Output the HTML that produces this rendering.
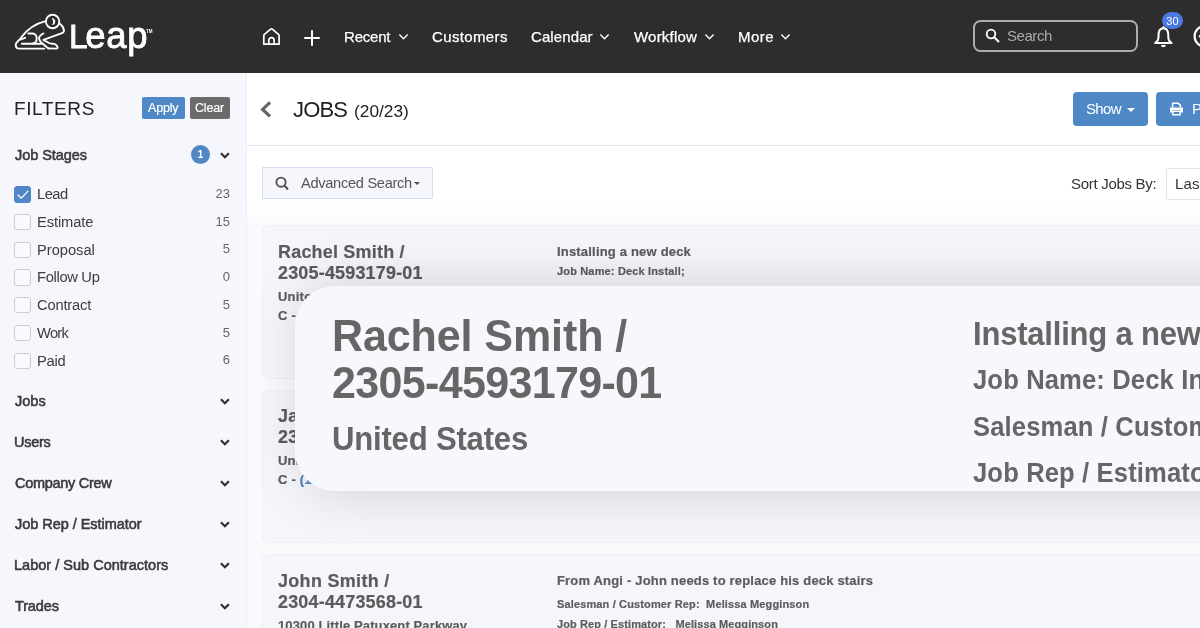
<!DOCTYPE html>
<html lang="en">
<head>
<meta charset="utf-8">
<title>Leap - Jobs</title>
<style>
*{box-sizing:border-box;margin:0;padding:0}
html,body{width:1200px;height:628px;overflow:hidden;background:#fff}
body{position:relative;font-family:"Liberation Sans",Arial,sans-serif;color:#333}
.t{position:absolute;white-space:nowrap;line-height:1;will-change:transform}
.abs{position:absolute}
#hdr{position:absolute;left:0;top:0;width:1200px;height:72.5px;background:#2d2d2d}
#side{position:absolute;left:0;top:72px;width:246px;height:556px;background:#f6f7fd}
.cb{position:absolute;left:14.3px;width:16.4px;height:16.4px;border:1px solid #cbcbd1;border-radius:3px;background:#f9fafe}
.cb.on{background:#4f86c6;border-color:#4f86c6}
.chev{position:absolute;left:218.5px;width:12px;height:9px}
#main{position:absolute;left:246px;top:72px;width:954px;height:556px;background:#fff}
.card{position:absolute;left:262px;width:960px;height:153.6px;background:#f5f6fc;border:1px solid #eef0f7;border-radius:7px}
</style>
</head>
<body>

<!-- ===== MAIN ===== -->
<div id="main"></div>
<div class="abs" style="left:247px;top:144.5px;width:953px;height:1px;background:#e8e8eb"></div>
<div class="abs" style="left:247px;top:200px;width:953px;height:428px;background:linear-gradient(#fff 0,#fafafc 26px,#fafafc 100%)"></div>

<!-- title bar -->
<svg class="abs" style="left:258px;top:99px" width="16" height="21" viewBox="0 0 16 21"><path d="M12 3.4 L4.6 10.4 L12 17.4" fill="none" stroke="#666" stroke-width="3.2"/></svg>
<div class="t" style="font-size:22px;top:99px;left:293.00px;letter-spacing:-0.833px;transform:translateY(0.20px);color:#222;">JOBS</div>
<div class="t" style="font-size:17.3px;top:103px;left:353.70px;letter-spacing:0.017px;transform:translateY(0.20px);color:#222;">(20/23)</div>

<div class="abs" style="left:1073px;top:91.5px;width:74.8px;height:34.7px;background:#4f88c6;border-radius:4px"></div>
<div class="t" style="font-size:15px;top:101px;left:1085.70px;letter-spacing:-0.667px;transform:translateY(0.40px);color:#fff;">Show</div>
<div class="abs" style="left:1126.8px;top:108px;width:0;height:0;border-left:4.2px solid transparent;border-right:4.2px solid transparent;border-top:4.2px solid #fff"></div>
<div class="abs" style="left:1156px;top:91.5px;width:80px;height:34.7px;background:#4f88c6;border-radius:4px"></div>
<svg class="abs" style="left:1169px;top:102px" width="15" height="14" viewBox="0 0 15 14"><path d="M3.6 5.2V1.2h5.6l2.2 2.2v1.8" fill="none" stroke="#fff" stroke-width="1.5"/><path d="M1 5.4h13v5h-2.4v-2.2h-8.2v2.2h-2.4z" fill="#fff"/><path d="M3.9 9.4h7.2v3.4h-7.2z" fill="none" stroke="#fff" stroke-width="1.4"/></svg>
<div class="t" style="font-size:15px;top:101px;left:1191.60px;letter-spacing:0.200px;transform:translateY(0.40px);color:#fff;">Print</div>

<!-- advanced search -->
<div class="abs" style="left:262px;top:167px;width:170.7px;height:32px;background:#f5f7fd;border:1px solid #d3dff0;border-radius:1px"></div>
<svg class="abs" style="left:274px;top:175px" width="16" height="16" viewBox="0 0 16 16"><circle cx="7" cy="7.2" r="4.6" fill="none" stroke="#505050" stroke-width="1.9"/><path d="M10.3 10.6 L14 14.4" stroke="#505050" stroke-width="2.1"/></svg>
<div class="t" style="font-size:14.6px;top:175px;left:300.80px;letter-spacing:-0.286px;transform:translateY(0.90px);color:#555;">Advanced Search</div>
<div class="abs" style="left:414px;top:182px;width:0;height:0;border-left:3.7px solid transparent;border-right:3.7px solid transparent;border-top:3.7px solid #505050"></div>

<div class="t" style="font-size:15px;top:175px;left:1070.90px;letter-spacing:-0.292px;transform:translateY(0.90px);color:#333;">Sort Jobs By:</div>
<div class="abs" style="left:1166.3px;top:168.3px;width:80px;height:31.5px;background:#fff;border:1px solid #e4e4e8;border-radius:3px"></div>
<div class="t" style="font-size:15px;top:175px;left:1175.30px;letter-spacing:0.200px;transform:translateY(0.90px);color:#333;">Last Modified</div>

<!-- cards -->
<div class="card" style="top:225px"></div>
<div class="t" style="font-size:18px;top:243px;left:277.70px;letter-spacing:0.192px;transform:translateY(0.00px) scaleY(1.046);transform-origin:0 15px;font-weight:700;color:#5c5c5c;-webkit-text-stroke:0.2px #5c5c5c;left:277.7px;">Rachel Smith /</div>
<div class="t" style="font-size:18px;top:263px;left:276.90px;letter-spacing:0.171px;transform:translateY(0.60px) scaleY(1.046);transform-origin:0 15px;font-weight:700;color:#5c5c5c;-webkit-text-stroke:0.2px #5c5c5c;left:277.7px;">2305-4593179-01</div>
<div class="t" style="font-size:13px;top:289px;left:276.90px;letter-spacing:0.220px;transform:translateY(0.80px) scaleY(1.046);transform-origin:0 11px;font-weight:700;color:#5c5c5c;-webkit-text-stroke:0.2px #5c5c5c;left:277.7px;">United States</div>
<div class="t" style="font-size:13px;top:308px;left:277.90px;letter-spacing:0.220px;transform:translateY(0.70px) scaleY(1.046);transform-origin:0 11px;font-weight:700;color:#5c5c5c;-webkit-text-stroke:0.2px #5c5c5c;left:277.7px;">C - <span style="color:#4a86c8">(123) 456-7890</span></div>
<div class="t" style="font-size:13px;top:244px;left:556.20px;letter-spacing:0.190px;transform:translateY(0.70px) scaleY(1.046);transform-origin:0 11px;font-weight:700;color:#5c5c5c;-webkit-text-stroke:0.2px #5c5c5c;left:556.9px;">Installing a new deck</div>
<div class="t" style="font-size:11px;top:265px;left:557.20px;letter-spacing:0.159px;transform:translateY(0.50px) scaleY(1.046);transform-origin:0 9px;font-weight:700;color:#5c5c5c;-webkit-text-stroke:0.2px #5c5c5c;left:557.1px;">Job Name: Deck Install;</div>

<div class="card" style="top:389.7px"></div>
<div class="t" style="font-size:18px;top:407px;left:277.80px;letter-spacing:0.300px;transform:translateY(0.40px) scaleY(1.046);transform-origin:0 15px;font-weight:700;color:#5c5c5c;-webkit-text-stroke:0.2px #5c5c5c;left:277.7px;">Jane Smith /</div>
<div class="t" style="font-size:18px;top:428px;left:276.90px;letter-spacing:0.171px;transform:translateY(0.10px) scaleY(1.046);transform-origin:0 15px;font-weight:700;color:#5c5c5c;-webkit-text-stroke:0.2px #5c5c5c;left:277.7px;">2305-4593180-01</div>
<div class="t" style="font-size:13px;top:454px;left:276.90px;letter-spacing:0.220px;transform:translateY(0.40px) scaleY(1.046);transform-origin:0 11px;font-weight:700;color:#5c5c5c;-webkit-text-stroke:0.2px #5c5c5c;left:277.7px;">United States</div>
<div class="t" style="font-size:13px;top:473px;left:277.90px;letter-spacing:0.220px;transform:translateY(0.20px) scaleY(1.046);transform-origin:0 11px;font-weight:700;color:#5c5c5c;-webkit-text-stroke:0.2px #5c5c5c;left:277.7px;">C - <span style="color:#4a86c8">(123) 456-7890</span></div>

<div class="card" style="top:554.3px"></div>
<div class="t" style="font-size:18px;top:572px;left:278.00px;letter-spacing:0.300px;transform:translateY(0.00px) scaleY(1.046);transform-origin:0 15px;font-weight:700;color:#5c5c5c;-webkit-text-stroke:0.2px #5c5c5c;left:277.7px;">John Smith /</div>
<div class="t" style="font-size:18px;top:592px;left:276.90px;letter-spacing:0.171px;transform:translateY(0.60px) scaleY(1.046);transform-origin:0 15px;font-weight:700;color:#5c5c5c;-webkit-text-stroke:0.2px #5c5c5c;left:277.7px;">2304-4473568-01</div>
<div class="t" style="font-size:13px;top:618px;left:277.00px;letter-spacing:0.120px;transform:translateY(0.80px) scaleY(1.046);transform-origin:0 11px;font-weight:700;color:#5c5c5c;-webkit-text-stroke:0.2px #5c5c5c;left:277.7px;">10300 Little Patuxent Parkway</div>
<div class="t" style="font-size:13px;top:573px;left:556.20px;letter-spacing:0.183px;transform:translateY(0.60px) scaleY(1.046);transform-origin:0 11px;font-weight:700;color:#5c5c5c;-webkit-text-stroke:0.2px #5c5c5c;left:556.9px;">From Angi - John needs to replace his deck stairs</div>
<div class="t" style="font-size:11px;top:599px;left:557.20px;letter-spacing:0.138px;transform:translateY(0.00px) scaleY(1.046);transform-origin:0 9px;font-weight:700;color:#5c5c5c;-webkit-text-stroke:0.2px #5c5c5c;left:557.1px;">Salesman / Customer Rep:&nbsp; Melissa Megginson</div>
<div class="t" style="font-size:11px;top:619px;left:557.20px;letter-spacing:0.100px;transform:translateY(0.00px) scaleY(1.046);transform-origin:0 9px;font-weight:700;color:#5c5c5c;-webkit-text-stroke:0.2px #5c5c5c;left:557.1px;">Job Rep / Estimator:&nbsp;&nbsp; Melissa Megginson</div>

<!-- magnifier overlay -->
<div class="abs" style="left:295.1px;top:285.6px;width:960px;height:205px;background:#f7f8fd;border-radius:40px;box-shadow:10px 0 50px 8px rgba(0,0,0,.12)"></div>
<div class="t" style="font-size:43px;top:314px;left:332.00px;letter-spacing:-0.092px;transform:translateY(0.80px) scaleY(1.046);transform-origin:0 36px;font-weight:700;color:#666;left:331.8px;">Rachel Smith /</div>
<div class="t" style="font-size:43px;top:361px;left:331.90px;letter-spacing:-0.664px;transform:translateY(0.90px) scaleY(1.046);transform-origin:0 36px;font-weight:700;color:#666;left:331.8px;">2305-4593179-01</div>
<div class="t" style="font-size:31.1px;top:423px;left:331.80px;letter-spacing:-0.208px;transform:translateY(0.60px) scaleY(1.046);transform-origin:0 26px;font-weight:700;color:#666;left:331.8px;">United States</div>
<div class="t" style="font-size:31px;top:319px;left:972.30px;letter-spacing:-0.200px;transform:translateY(0.10px) scaleY(1.046);transform-origin:0 26px;font-weight:700;color:#666;left:972.5px;">Installing a new deck</div>
<div class="t" style="font-size:25.6px;top:367px;left:973.60px;letter-spacing:0.130px;transform:translateY(0.60px) scaleY(1.046);transform-origin:0 21px;font-weight:700;color:#666;left:972.7px;">Job Name: Deck Install;</div>
<div class="t" style="font-size:25.6px;top:414px;left:972.80px;letter-spacing:0.130px;transform:translateY(0.60px) scaleY(1.046);transform-origin:0 21px;font-weight:700;color:#666;left:972.7px;">Salesman / Customer Rep:</div>
<div class="t" style="font-size:25.6px;top:461px;left:973.60px;letter-spacing:0.130px;transform:translateY(0.40px) scaleY(1.046);transform-origin:0 21px;font-weight:700;color:#666;left:972.7px;">Job Rep / Estimator:</div>

<!-- ===== SIDEBAR ===== -->
<div id="side"></div>
<div class="abs" style="left:245.5px;top:72px;width:1.5px;height:556px;background:#eeeef2"></div>

<div class="t" style="font-size:19px;top:98px;left:13.60px;letter-spacing:0.600px;transform:translateY(0.70px);color:#222;">FILTERS</div>
<div class="abs" style="left:142px;top:97px;width:42.8px;height:21.8px;background:#4f88c6;border-radius:2px"></div>
<div class="t" style="font-size:12.5px;top:101px;left:148.30px;letter-spacing:-0.200px;transform:translateY(0.70px);color:#fff;-webkit-text-stroke:0.2px #fff;">Apply</div>
<div class="abs" style="left:189.6px;top:97px;width:40.3px;height:21.8px;background:#6b6b6b;border-radius:2px"></div>
<div class="t" style="font-size:12.5px;top:101px;left:194.80px;letter-spacing:-0.200px;transform:translateY(0.70px);color:#fff;-webkit-text-stroke:0.2px #fff;">Clear</div>

<div class="t" style="font-size:14.5px;top:147px;left:14.70px;letter-spacing:-0.050px;transform:translateY(0.80px);color:#3a3a3a;-webkit-text-stroke:0.55px #3a3a3a;">Job Stages</div>
<div class="abs" style="left:190.9px;top:144.8px;width:19px;height:19px;border-radius:9.5px;background:#5087c5"></div>
<div class="t" style="font-size:10.5px;top:148px;transform:translateY(0.60px);color:#fff;font-weight:700;width:19px;text-align:center;left:190.6px;">1</div>
<svg class="chev" style="top:151.2px" viewBox="0 0 12 9"><path d="M1.9 2.2 L5.9 6.2 L9.9 2.2" fill="none" stroke="#303030" stroke-width="2.2"/></svg>
<div class="cb on" style="top:186.20px"></div>
<svg class="abs" style="left:14.3px;top:186.20px" width="16.4" height="16.4" viewBox="0 0 17 17"><path d="M3.9 9.1 L7.6 12.6 L14.7 5.1" fill="none" stroke="#fff" stroke-width="1.35"/></svg>
<div class="t" style="font-size:14.7px;top:187px;left:36.80px;letter-spacing:-0.500px;transform:translateY(0.20px);color:#3d3d3d;">Lead</div>
<div class="t" style="font-size:13px;top:187px;color:#666;width:40px;text-align:right;left:190px;">23</div>
<div class="cb" style="top:213.92px"></div>
<div class="t" style="font-size:14.7px;top:214px;left:36.80px;letter-spacing:-0.114px;transform:translateY(0.92px);color:#3d3d3d;">Estimate</div>
<div class="t" style="font-size:13px;top:214px;transform:translateY(0.72px);color:#666;width:40px;text-align:right;left:190px;">15</div>
<div class="cb" style="top:241.64px"></div>
<div class="t" style="font-size:14.7px;top:242px;left:36.80px;letter-spacing:-0.014px;transform:translateY(0.64px);color:#3d3d3d;">Proposal</div>
<div class="t" style="font-size:13px;top:242px;transform:translateY(0.44px);color:#666;width:40px;text-align:right;left:190px;">5</div>
<div class="cb" style="top:269.36px"></div>
<div class="t" style="font-size:14.7px;top:270px;left:36.80px;letter-spacing:-0.312px;transform:translateY(0.36px);color:#3d3d3d;">Follow Up</div>
<div class="t" style="font-size:13px;top:270px;transform:translateY(0.16px);color:#666;width:40px;text-align:right;left:190px;">0</div>
<div class="cb" style="top:297.08px"></div>
<div class="t" style="font-size:14.7px;top:298px;left:36.80px;letter-spacing:-0.186px;transform:translateY(0.08px);color:#3d3d3d;">Contract</div>
<div class="t" style="font-size:13px;top:297px;transform:translateY(0.88px);color:#666;width:40px;text-align:right;left:190px;">5</div>
<div class="cb" style="top:324.80px"></div>
<div class="t" style="font-size:14.7px;top:325px;left:37.00px;letter-spacing:-0.700px;transform:translateY(0.80px);color:#3d3d3d;">Work</div>
<div class="t" style="font-size:13px;top:325px;transform:translateY(0.60px);color:#666;width:40px;text-align:right;left:190px;">5</div>
<div class="cb" style="top:352.52px"></div>
<div class="t" style="font-size:14.7px;top:353px;left:36.80px;letter-spacing:-0.233px;transform:translateY(0.52px);color:#3d3d3d;">Paid</div>
<div class="t" style="font-size:13px;top:353px;transform:translateY(0.32px);color:#666;width:40px;text-align:right;left:190px;">6</div>
<div class="t" style="font-size:14.5px;top:393px;left:14.70px;transform:translateY(0.60px);color:#3a3a3a;-webkit-text-stroke:0.55px #3a3a3a;">Jobs</div>
<svg class="chev" style="top:396.9px" viewBox="0 0 12 9"><path d="M1.9 2.2 L5.9 6.2 L9.9 2.2" fill="none" stroke="#303030" stroke-width="2.2"/></svg>
<div class="t" style="font-size:14.5px;top:434px;left:13.70px;letter-spacing:-0.250px;transform:translateY(0.68px);color:#3a3a3a;-webkit-text-stroke:0.55px #3a3a3a;">Users</div>
<svg class="chev" style="top:438.0px" viewBox="0 0 12 9"><path d="M1.9 2.2 L5.9 6.2 L9.9 2.2" fill="none" stroke="#303030" stroke-width="2.2"/></svg>
<div class="t" style="font-size:14.5px;top:475px;left:14.70px;letter-spacing:-0.291px;transform:translateY(0.76px);color:#3a3a3a;-webkit-text-stroke:0.55px #3a3a3a;">Company Crew</div>
<svg class="chev" style="top:479.1px" viewBox="0 0 12 9"><path d="M1.9 2.2 L5.9 6.2 L9.9 2.2" fill="none" stroke="#303030" stroke-width="2.2"/></svg>
<div class="t" style="font-size:14.5px;top:516px;left:14.70px;letter-spacing:-0.039px;transform:translateY(0.84px);color:#3a3a3a;-webkit-text-stroke:0.55px #3a3a3a;">Job Rep / Estimator</div>
<svg class="chev" style="top:520.1px" viewBox="0 0 12 9"><path d="M1.9 2.2 L5.9 6.2 L9.9 2.2" fill="none" stroke="#303030" stroke-width="2.2"/></svg>
<div class="t" style="font-size:14.5px;top:557px;left:13.70px;letter-spacing:0.014px;transform:translateY(0.92px);color:#3a3a3a;-webkit-text-stroke:0.55px #3a3a3a;">Labor / Sub Contractors</div>
<svg class="chev" style="top:561.2px" viewBox="0 0 12 9"><path d="M1.9 2.2 L5.9 6.2 L9.9 2.2" fill="none" stroke="#303030" stroke-width="2.2"/></svg>
<div class="t" style="font-size:14.5px;top:599px;left:14.70px;letter-spacing:-0.140px;color:#3a3a3a;-webkit-text-stroke:0.55px #3a3a3a;">Trades</div>
<svg class="chev" style="top:602.3px" viewBox="0 0 12 9"><path d="M1.9 2.2 L5.9 6.2 L9.9 2.2" fill="none" stroke="#303030" stroke-width="2.2"/></svg>

<!-- ===== HEADER ===== -->
<div id="hdr"></div>
<svg class="abs" style="left:0;top:0" width="80" height="60" viewBox="0 0 80 60"><g fill="none" stroke="#fff" stroke-width="1.9" stroke-linecap="round" stroke-linejoin="round">
<circle cx="52.6" cy="21.5" r="6.7"/>
<path d="M45.6 21.2 C36 23.5 27.5 29 21.1 37.5 C19.5 39.5 18 41 16.8 42.4 C15 44.5 15.3 48.6 19 48.6 L44.2 48.6"/>
<path d="M20.2 39.6 L25.1 37.8"/>
<path d="M59.6 23.6 C62 25.5 63.6 28 63.9 30 C64.2 32 63.6 32.6 62 33.2 L43.4 39.9 L49 43 C51 44 52.5 43.6 54.2 43.9 C56 44.3 57.6 46.5 57.6 47.6 C57.6 48.3 57.2 48.6 56.5 48.6 L48.6 48.4"/>
<path d="M43.4 33.5 C40.5 35 39 36.8 39.1 38.3 C39.3 40 40 41.2 41 42.2 L48.4 48.4"/>
<path d="M28.3 33.5 L32.6 33.5 C35 33.5 36.7 35.5 36.7 38.3 C36.7 41.5 35 43.4 32.5 43.6"/>
<path d="M21.9 43.7 L41.5 43.7"/>
</g><path d="M51.6 17.9 C56.4 18 56.6 24.8 51.9 25.1 C53.6 23 53.6 20 51.6 17.9Z" fill="#fff"/></svg>
<div class="t" style="left:68.6px;top:15.6px;font-size:33.5px;line-height:40px;color:#fff;-webkit-text-stroke:0.85px #fff">L<span style="font-size:36.5px;letter-spacing:0.7px;margin-left:-2.4px">eap</span></div>
<div class="t" style="left:146px;top:30px;font-size:4.5px;color:#fff;font-weight:700">TM</div>
<svg class="abs" style="left:261px;top:26px" width="21" height="21" viewBox="0 0 21 21"><path d="M2.8 9.6 C2.8 9 3 8.7 3.4 8.3 L9.6 3.1 C10.1 2.7 10.8 2.7 11.3 3.1 L17.5 8.3 C17.9 8.7 18.1 9 18.1 9.6 V18.2 H2.8 Z" fill="none" stroke="#fff" stroke-width="1.7" stroke-linejoin="round"/><path d="M7.8 18.2 V14.3 a2.65 2.65 0 0 1 5.3 0 V18.2" fill="none" stroke="#fff" stroke-width="1.7"/></svg>
<svg class="abs" style="left:303.2px;top:28.9px" width="18" height="18" viewBox="0 0 18 18"><path d="M9 1.2 V16.8 M1.2 9 H16.8" stroke="#fff" stroke-width="2" fill="none"/></svg>
<div class="t" style="font-size:15px;top:28px;left:344.30px;letter-spacing:-0.200px;transform:translateY(0.90px);color:#fff;-webkit-text-stroke:0.25px #fff;">Recent</div>
<div class="t" style="font-size:15px;top:28px;left:431.80px;letter-spacing:0.362px;transform:translateY(0.90px);color:#fff;-webkit-text-stroke:0.25px #fff;">Customers</div>
<div class="t" style="font-size:15px;top:28px;left:531.10px;letter-spacing:0.100px;transform:translateY(0.90px);color:#fff;-webkit-text-stroke:0.25px #fff;">Calendar</div>
<div class="t" style="font-size:15px;top:28px;left:633.90px;letter-spacing:0.200px;transform:translateY(0.90px);color:#fff;-webkit-text-stroke:0.25px #fff;">Workflow</div>
<div class="t" style="font-size:15px;top:28px;left:737.90px;letter-spacing:0.433px;transform:translateY(0.90px);color:#fff;-webkit-text-stroke:0.25px #fff;">More</div>
<svg class="abs" style="left:397.5px;top:33px" width="11" height="8" viewBox="0 0 11 8"><path d="M1.4 1.6 L5.5 5.7 L9.6 1.6" fill="none" stroke="#fff" stroke-width="1.4"/></svg>
<svg class="abs" style="left:598.6px;top:33px" width="11" height="8" viewBox="0 0 11 8"><path d="M1.4 1.6 L5.5 5.7 L9.6 1.6" fill="none" stroke="#fff" stroke-width="1.4"/></svg>
<svg class="abs" style="left:703.6px;top:33px" width="11" height="8" viewBox="0 0 11 8"><path d="M1.4 1.6 L5.5 5.7 L9.6 1.6" fill="none" stroke="#fff" stroke-width="1.4"/></svg>
<svg class="abs" style="left:779.5px;top:33px" width="11" height="8" viewBox="0 0 11 8"><path d="M1.4 1.6 L5.5 5.7 L9.6 1.6" fill="none" stroke="#fff" stroke-width="1.4"/></svg>
<div class="abs" style="left:973.3px;top:20px;width:164.4px;height:32.2px;border:2px solid #adadad;border-radius:7.5px"></div>
<svg class="abs" style="left:985px;top:28px" width="16" height="16" viewBox="0 0 16 16"><circle cx="6" cy="6" r="4.3" fill="none" stroke="#fff" stroke-width="1.8"/><path d="M9.2 9.2 L14 14" stroke="#fff" stroke-width="2"/></svg>
<div class="t" style="font-size:15px;top:27px;left:1006.50px;letter-spacing:-0.440px;transform:translateY(0.80px);color:#aaa;">Search</div>
<svg class="abs" style="left:1153px;top:26px" width="21" height="23" viewBox="0 0 21 23"><path d="M2.2 17 H18.6" stroke="#fff" stroke-width="2.1" stroke-linecap="round" fill="none"/><path d="M2.6 16.6 C4.6 15.2 5.5 14 5.5 12 V9.3 C5.5 4.8 7.6 2.2 10.4 2.2 C13.2 2.2 15.3 4.8 15.3 9.3 V12 C15.3 14 16.2 15.2 18.2 16.6" fill="none" stroke="#fff" stroke-width="2" stroke-linejoin="round"/><path d="M8 19 h4.8 a2.4 2.2 0 0 1 -4.8 0z" fill="#fff"/><path d="M10.4 0.7 V2.4" stroke="#fff" stroke-width="1.6" stroke-linecap="round"/></svg>
<div class="abs" style="left:1161.9px;top:11.8px;width:21.2px;height:17.3px;border-radius:9.6px/8.65px;background:#4a79e6"></div>
<div class="t" style="font-size:11px;top:15px;letter-spacing:0.200px;transform:translateY(0.60px);color:#fff;width:21.2px;text-align:center;left:1162.1px;">30</div>
<svg class="abs" style="left:1190px;top:22px" width="12" height="30" viewBox="0 0 12 30"><circle cx="14.8" cy="14.3" r="10.2" fill="none" stroke="#fff" stroke-width="2.2"/><path d="M12 11.8 L8.8 14.3 L12 16.8Z" fill="#fff" stroke="#fff" stroke-width="1"/></svg>

</body>
</html>
